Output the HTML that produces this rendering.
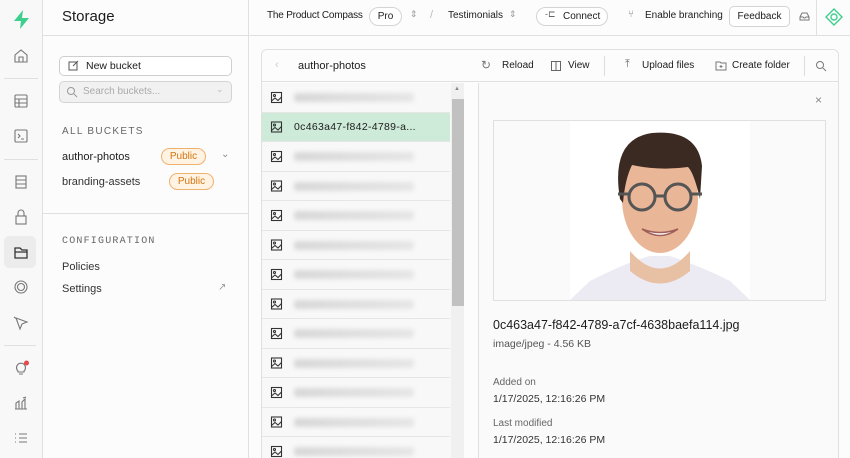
<!DOCTYPE html>
<html style="width:850px;height:458px;overflow:hidden"><head><meta charset="utf-8"><style>
*{box-sizing:border-box;margin:0;padding:0}
body{width:850px;height:458px;overflow:hidden;background:#fcfcfc;font-family:"Liberation Sans",sans-serif;color:#1c1c1c;position:relative;font-size:11px}
.a{position:absolute}
.rail{left:0;top:0;width:43px;height:458px;background:#f8f8f8;border-right:1px solid #e0e0e0}
.ico{position:absolute;left:11px;width:20px;height:20px}
.side{left:43px;top:0;width:206px;height:458px;background:#fcfcfc;border-right:1px solid #e0e0e0}
.top{left:249px;top:0;width:601px;height:36px;border-bottom:1px solid #e0e0e0;background:#fcfcfc}
.pill{border:1px solid #d4d4d4;border-radius:12px;background:#fff}
.blur{position:absolute;left:32px;top:10px;height:9px;width:120px;background:linear-gradient(90deg,#d8d8d8,#e6e6e6);filter:blur(2px);border-radius:3px}
.row{position:absolute;left:0;width:188px;height:29.5px;border-bottom:1px solid #e6e6e6}
.t{font-size:10px;white-space:nowrap}
</style></head><body>
<div class="a rail">
 <svg class="a" style="left:11px;top:9px" width="21" height="21" viewBox="0 0 21 21"><path d="M12 1 L3 12 H10 L9 20 L18 9 H11 Z" fill="#3ecf8e"/></svg>
 <svg class="ico" style="top:46px" viewBox="0 0 20 20" fill="none" stroke="#777" stroke-width="1.1"><path d="M4 9 L10 4 L16 9 V16 H4 Z M8 16 V11 H12 V16"/></svg>
 <div class="a" style="left:4px;top:78px;width:34px;border-top:1px solid #e0e0e0"></div>
 <svg class="ico" style="top:91px" viewBox="0 0 20 20" fill="none" stroke="#777" stroke-width="1.1"><rect x="4" y="4" width="12" height="12" rx="1"/><path d="M4 8H16M4 12H16M8 8V16"/></svg>
 <svg class="ico" style="top:126px" viewBox="0 0 20 20" fill="none" stroke="#777" stroke-width="1.1"><rect x="4" y="4" width="12" height="12" rx="1"/><path d="M7 8L9 10L7 12M10 13H13"/></svg>
 <div class="a" style="left:4px;top:159px;width:34px;border-top:1px solid #e0e0e0"></div>
 <svg class="ico" style="top:172px" viewBox="0 0 20 20" fill="none" stroke="#777" stroke-width="1.1"><rect x="5" y="4" width="10" height="12"/><path d="M5 8H15M5 12H15"/></svg>
 <svg class="ico" style="top:207px" viewBox="0 0 20 20" fill="none" stroke="#777" stroke-width="1.1"><rect x="5" y="9" width="10" height="8"/><path d="M7 9V6A3 3 0 0 1 13 6V9"/></svg>
 <div class="a" style="left:4px;top:236px;width:32px;height:32px;background:#ececec;border-radius:5px"></div>
 <svg class="ico" style="top:242px" viewBox="0 0 20 20" fill="none" stroke="#333" stroke-width="1.3"><path d="M4 6H9L11 8H16V16H4Z M4 10H16"/></svg>
 <svg class="ico" style="top:277px" viewBox="0 0 20 20" fill="none" stroke="#777" stroke-width="1.1"><circle cx="10" cy="10" r="6"/><circle cx="10" cy="10" r="3.5"/></svg>
 <svg class="ico" style="top:313px" viewBox="0 0 20 20" fill="none" stroke="#777" stroke-width="1.1"><path d="M5 5L16 9L11 11L9 16Z M3 4L6 6"/></svg>
 <div class="a" style="left:4px;top:345px;width:32px;border-top:1px solid #e0e0e0"></div>
 <svg class="ico" style="top:358px" viewBox="0 0 20 20" fill="none" stroke="#777" stroke-width="1.1"><path d="M7 13A4.5 4.5 0 1 1 13 13V14H7Z M8 16H12"/><circle cx="15.5" cy="5" r="2.5" fill="#e5484d" stroke="none"/></svg>
 <svg class="ico" style="top:393px" viewBox="0 0 20 20" fill="none" stroke="#777" stroke-width="1.1"><path d="M4 16H16M5 16V10L8 8V16M11 16V9L14 6V16M12 5L15 4"/></svg>
 <svg class="ico" style="top:428px" viewBox="0 0 20 20" fill="none" stroke="#777" stroke-width="1.1"><path d="M8 6H16M8 10H16M8 14H16M4 6H5M4 10H5M4 14H5"/></svg>
</div>
<div class="a side">
 <div class="a" style="left:0;top:0;width:206px;height:36px;border-bottom:1px solid #e0e0e0"></div>
 <div class="a" style="left:19px;top:8px;font-size:15px">Storage</div>
 <div class="a" style="left:16px;top:56px;width:173px;height:20px;border:1px solid #cfcfcf;border-radius:5px;background:#fff"></div>
 <svg class="a" style="left:24px;top:59px" width="13" height="13" viewBox="0 0 13 13" fill="none" stroke="#555"><rect x="2" y="3" width="8" height="8"/><path d="M6 7L11 2"/></svg>
 <div class="a" style="left:43px;top:60px;font-size:10.5px">New bucket</div>
 <div class="a" style="left:16px;top:81px;width:173px;height:22px;border:1px solid #d4d4d4;border-radius:5px;background:#f1f1f1"></div>
 <svg class="a" style="left:23px;top:86px" width="12" height="12" viewBox="0 0 12 12" fill="none" stroke="#999"><circle cx="5" cy="5" r="3.5"/><path d="M8 8L11 11"/></svg>
 <div class="a" style="left:40px;top:86px;font-size:10px;color:#aaa">Search buckets...</div>
 <div class="a" style="left:173px;top:84px;font-size:9px;color:#bbb">⌄</div>
 <div class="a" style="left:19px;top:126px;font-size:10px;letter-spacing:1.3px;color:#666">ALL BUCKETS</div>
 <div class="a" style="left:19px;top:151px;font-size:11px">author-photos</div>
 <div class="a" style="left:118px;top:148px;width:45px;height:17px;border:1px solid #f0b070;background:#fff3e3;border-radius:9px;color:#d4740f;font-size:10px;text-align:center;line-height:15px">Public</div>
 <div class="a" style="left:178px;top:149px;font-size:10px;color:#888">⌄</div>
 <div class="a" style="left:19px;top:176px;font-size:11px;color:#333">branding-assets</div>
 <div class="a" style="left:126px;top:173px;width:45px;height:17px;border:1px solid #f0b070;background:#fff3e3;border-radius:9px;color:#d4740f;font-size:10px;text-align:center;line-height:15px">Public</div>
 <div class="a" style="left:0;top:213px;width:206px;border-top:1px solid #e0e0e0"></div>
 <div class="a" style="left:19px;top:236px;font-size:10px;letter-spacing:1.2px;color:#666;font-family:'Liberation Mono',monospace">CONFIGURATION</div>
 <div class="a" style="left:19px;top:261px;font-size:11px;color:#333">Policies</div>
 <div class="a" style="left:19px;top:283px;font-size:11px;color:#333">Settings</div>
 <div class="a" style="left:175px;top:282px;font-size:10px;color:#999">↗</div>
</div>
<div class="a top">
 <div class="a t" style="left:18px;top:10px;letter-spacing:-.2px">The Product Compass</div>
 <div class="a pill t" style="left:120px;top:7px;width:33px;height:19px;text-align:center;line-height:17px">Pro</div>
 <div class="a" style="left:161px;top:9px;font-size:9px;color:#999">⇕</div>
 <div class="a" style="left:181px;top:9px;color:#bbb">/</div>
 <div class="a t" style="left:199px;top:10px">Testimonials</div>
 <div class="a" style="left:260px;top:9px;font-size:9px;color:#999">⇕</div>
 <div class="a pill t" style="left:287px;top:7px;width:72px;height:19px;border-radius:10px;line-height:17px;padding-left:26px">Connect</div>
 <div class="a" style="left:296px;top:9px;font-size:9px;color:#666">-⊏</div>
 <div class="a" style="left:379px;top:9px;font-size:10px;color:#888">⑂</div>
 <div class="a t" style="left:396px;top:10px">Enable branching</div>
 <div class="a t" style="left:480px;top:6px;width:61px;height:21px;border:1px solid #d4d4d4;border-radius:5px;background:#fff;text-align:center;line-height:19px">Feedback</div>
 <svg class="a" style="left:549px;top:10px" width="13" height="13" viewBox="0 0 13 13" fill="none" stroke="#777"><path d="M2 7L4 3H9L11 7V10H2Z M2 7H5L6 8H7L8 7H11"/></svg>
 <div class="a" style="left:567px;top:0;height:36px;border-left:1px solid #e0e0e0"></div>
 <svg class="a" style="left:575px;top:7px" width="20" height="20" viewBox="0 0 20 20" fill="none" stroke="#3ecf8e" stroke-width="1.4"><path d="M10 2L18 10L10 18L2 10Z"/><circle cx="10" cy="10" r="3"/></svg>
</div>
<div class="a" style="left:261px;top:49px;width:578px;height:409px;border:1px solid #e0e0e0;border-bottom:none;border-radius:6px 6px 0 0;background:#fcfcfc;overflow:hidden">
 <div class="a" style="left:0;top:0;width:578px;height:32px;border-bottom:1px solid #e0e0e0;background:#fcfcfc"></div>
 <div class="a" style="left:13px;top:9px;color:#ccc">‹</div>
 <div class="a" style="left:36px;top:10px;font-size:11px">author-photos</div>
 <div class="a" style="left:219px;top:8px;color:#777;font-size:12px">↻</div>
 <div class="a t" style="left:240px;top:10px">Reload</div>
 <svg class="a" style="left:288px;top:10px" width="12" height="12" viewBox="0 0 12 12" fill="none" stroke="#666"><rect x="1.5" y="1.5" width="9" height="9"/><path d="M6 1.5V10.5"/></svg>
 <div class="a t" style="left:306px;top:10px">View</div>
 <div class="a" style="left:342px;top:6px;height:20px;border-left:1px solid #ddd"></div>
 <div class="a" style="left:363px;top:8px;color:#666;font-size:11px">⤒</div>
 <div class="a t" style="left:380px;top:10px">Upload files</div>
 <svg class="a" style="left:453px;top:10px" width="12" height="11" viewBox="0 0 12 11" fill="none" stroke="#777"><path d="M1 2H5L6 3H11V10H1Z M6 5V8M4.5 6.5H7.5"/></svg>
 <div class="a t" style="left:470px;top:10px">Create folder</div>
 <div class="a" style="left:542px;top:6px;height:20px;border-left:1px solid #ddd"></div>
 <svg class="a" style="left:553px;top:10px" width="12" height="12" viewBox="0 0 12 12" fill="none" stroke="#777"><circle cx="5" cy="5" r="3.5"/><path d="M8 8L11 11"/></svg>
 <div class="a" style="left:0;top:33px;width:202px;height:376px;background:#f8f8f8;overflow:hidden">
  <div class="row" style="top:0"><div class="blur"></div></div>
  <div class="row" style="top:29.5px;background:#cdebd8"><div class="a" style="left:32px;top:8px;font-size:10.5px;letter-spacing:.3px">0c463a47-f842-4789-a...</div></div>
  <div class="row" style="top:59px"><div class="blur"></div></div>
  <div class="row" style="top:88.5px"><div class="blur"></div></div>
  <div class="row" style="top:118px"><div class="blur"></div></div>
  <div class="row" style="top:147.5px"><div class="blur"></div></div>
  <div class="row" style="top:177px"><div class="blur"></div></div>
  <div class="row" style="top:206.5px"><div class="blur"></div></div>
  <div class="row" style="top:236px"><div class="blur"></div></div>
  <div class="row" style="top:265.5px"><div class="blur"></div></div>
  <div class="row" style="top:295px"><div class="blur"></div></div>
  <div class="row" style="top:324.5px"><div class="blur"></div></div>
  <div class="row" style="top:354px"><div class="blur"></div></div>
  <svg class="a" style="left:8px;top:8px" width="13" height="368" viewBox="0 0 13 368" fill="none" stroke="#333" stroke-width="1.1">
   <g id="i"><rect x="1.5" y="1.5" width="10" height="10"/><circle cx="4.5" cy="4.5" r="1"/><path d="M1.5 10L5 7L8 9.5L11.5 6"/></g>
   <use href="#i" y="29.5"/><use href="#i" y="59"/><use href="#i" y="88.5"/><use href="#i" y="118"/><use href="#i" y="147.5"/><use href="#i" y="177"/><use href="#i" y="206.5"/><use href="#i" y="236"/><use href="#i" y="265.5"/><use href="#i" y="295"/><use href="#i" y="324.5"/><use href="#i" y="354"/>
  </svg>
  <div class="a" style="left:189px;top:0;width:14px;height:376px;background:#f0f0f0"></div>
  <div class="a" style="left:190px;top:16px;width:12px;height:207px;background:#c1c1c1"></div>
  <div class="a" style="left:192px;top:3px;font-size:6px;color:#888">▲</div>
 </div>
 <div class="a" style="left:216px;top:33px;width:362px;height:376px;border-left:1px solid #e0e0e0;background:#fafafa">
  <div class="a" style="left:336px;top:10px;color:#888;font-size:12px">×</div>
  <div class="a" style="left:14px;top:37px;width:333px;height:181px;border:1px solid #e0e0e0;background:#fafafa"></div>
  <svg class="a" style="left:91px;top:38px" width="180" height="179" viewBox="0 0 180 179">
   <rect width="180" height="179" fill="#fff"/>
   <path d="M0 179 L20 160 Q60 140 80 135 L100 135 Q130 145 160 160 L180 179Z" fill="#eceaf2"/>
   <path d="M60 130 Q90 165 120 130 L120 150 Q90 175 60 150Z" fill="#e8c0a4"/>
   <ellipse cx="90" cy="78" rx="38" ry="54" fill="#e9b697"/>
   <path d="M50 78 Q40 18 82 12 Q128 8 132 45 L130 78 Q124 52 118 46 Q90 50 62 44 Q55 58 53 82Z" fill="#3b2a22"/>
   <g fill="none" stroke="#555" stroke-width="3"><circle cx="72" cy="76" r="13"/><circle cx="108" cy="76" r="13"/><path d="M85 75H95M48 73H59M121 73H132"/></g>
   <path d="M72 108 Q90 121 108 108 Q90 115 72 108Z" fill="#fff" stroke="#a0605a" stroke-width="1.5"/>
  </svg>
  <div class="a" style="left:14px;top:235px;font-size:12.5px">0c463a47-f842-4789-a7cf-4638baefa114.jpg</div>
  <div class="a" style="left:14px;top:255px;font-size:10.5px;color:#555">image/jpeg - 4.56 KB</div>
  <div class="a" style="left:14px;top:294px;font-size:10px;color:#666">Added on</div>
  <div class="a" style="left:14px;top:310px;font-size:10.5px;color:#333">1/17/2025, 12:16:26 PM</div>
  <div class="a" style="left:14px;top:335px;font-size:10px;color:#666">Last modified</div>
  <div class="a" style="left:14px;top:351px;font-size:10.5px;color:#333">1/17/2025, 12:16:26 PM</div>
 </div>
</div>
</body></html>
